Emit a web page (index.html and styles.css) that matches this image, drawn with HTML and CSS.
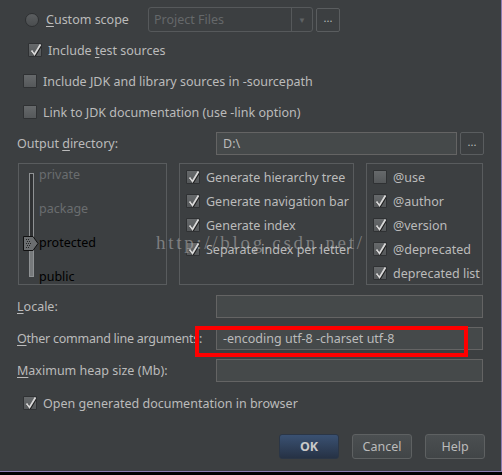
FILE: index.html
```html
<!DOCTYPE html>
<html lang="en">
<head>
  <meta charset="UTF-8" />
  <title>Generate JavaDoc</title>
  <link rel="stylesheet" href="styles.css">
</head>
<body>
  <div class="dialog">
    <!-- scope -->
    <div class="row scope-row">
      <span class="radio"></span>
      <span class="scope-label"><u>C</u>ustom scope</span>
      <div class="combo">
        <span class="combo-text">Project Files</span>
        <span class="combo-arrow">▼</span>
      </div>
      <button class="dots">...</button>
    </div>

    <div class="row check-row test-row">
      <span class="check on"></span>
      <span>Include <u>t</u>est sources</span>
    </div>
    <div class="row check-row">
      <span class="check"></span>
      <span>Include JDK and library sources in -sourcepath</span>
    </div>
    <div class="row check-row">
      <span class="check"></span>
      <span>Link to JDK documentation (use -link option)</span>
    </div>

    <div class="row field-row output-row">
      <span class="field-label">Output <u>d</u>irectory:</span>
      <div class="field short">D:\</div>
      <button class="dots">...</button>
    </div>

    <div class="panels">
      <div class="panel scope-panel">
        <div class="track">
          <div class="track-fill"></div>
          <div class="thumb">
            <svg width="16" height="15" viewBox="0 0 16 15">
              <path d="M0.5 0.5 H10 L15 7.5 L10 14.5 H0.5 Z" fill="#6b6e70" stroke="#111" />
              <g fill="#222">
                <rect x="3" y="3" width="1" height="1" /><rect x="5" y="3" width="1" height="1" />
                <rect x="4" y="5" width="1" height="1" /><rect x="6" y="5" width="1" height="1" />
                <rect x="3" y="7" width="1" height="1" /><rect x="5" y="7" width="1" height="1" /><rect x="7" y="7" width="1" height="1" />
                <rect x="4" y="9" width="1" height="1" /><rect x="6" y="9" width="1" height="1" />
                <rect x="3" y="11" width="1" height="1" /><rect x="5" y="11" width="1" height="1" />
              </g>
            </svg>
          </div>
        </div>
        <div class="levels">
          <span class="level off">private</span>
          <span class="level off">package</span>
          <span class="level">protected</span>
          <span class="level">public</span>
        </div>
      </div>

      <div class="panel options-panel">
        <div class="row check-row"><span class="check on"></span><span>Generate hierarchy tree</span></div>
        <div class="row check-row"><span class="check on"></span><span>Generate navigation bar</span></div>
        <div class="row check-row"><span class="check on"></span><span>Generate index</span></div>
        <div class="row check-row"><span class="check on"></span><span>Separate index per letter</span></div>
      </div>

      <div class="panel tags-panel">
        <div class="row check-row"><span class="check"></span><span>@use</span></div>
        <div class="row check-row"><span class="check on"></span><span>@author</span></div>
        <div class="row check-row"><span class="check on"></span><span>@version</span></div>
        <div class="row check-row"><span class="check on"></span><span>@deprecated</span></div>
        <div class="row check-row"><span class="check on"></span><span>deprecated list</span></div>
      </div>
    </div>

    <div class="row field-row locale-row">
      <span class="field-label"><u>L</u>ocale:</span>
      <div class="field"></div>
    </div>
    <div class="row field-row args-row">
      <span class="field-label"><u>O</u>ther command line arguments:</span>
      <div class="field">-encoding utf-8 -charset utf-8</div>
      <div class="mark"></div>
    </div>
    <div class="row field-row heap-row">
      <span class="field-label"><u>M</u>aximum heap size (Mb):</span>
      <div class="field"></div>
    </div>

    <div class="row check-row open-row">
      <span class="check on"></span>
      <span>Open <u>g</u>enerated documentation in browser</span>
    </div>

    <div class="buttons">
      <button class="btn default">OK</button>
      <button class="btn">Cancel</button>
      <button class="btn">Help</button>
    </div>

    <div class="watermark">http://blog.csdn.net/</div>
  </div>
</body>
</html>
```

FILE: styles.css
```css
* { box-sizing: border-box; }

html {
  background: #000;
}

body {
  margin: 0;
  font-family: 'Noto Sans', 'Liberation Sans', sans-serif;
  font-size: 12.5px;
  color: #bbbbbb;
}

u {
  text-decoration: underline;
  text-underline-offset: 2px;
}

.dialog {
  position: relative;
  width: 502px;
  height: 472px;
  background: #3c3f41;
  border-right: 1px solid #8d7cb3;
  border-bottom: 1px solid #8d7cb3;
  padding-top: 7px;
  overflow: hidden;
}

.row {
  display: flex;
  align-items: center;
}

/* scope line */
.scope-row {
  height: 25px;
  padding-left: 25px;
}

.radio {
  width: 14px;
  height: 14px;
  border-radius: 50%;
  background: linear-gradient(#5b5e60, #4a4d4f);
  border: 1px solid #2e3032;
  flex: none;
}

.scope-label {
  width: 109px;
  padding-left: 7px;
}

.combo {
  width: 165px;
  height: 25px;
  border: 1px solid #56595b;
  border-radius: 3px;
  display: flex;
  align-items: center;
}

.combo-text {
  flex: 1;
  padding-left: 5px;
  color: #65686a;
}

.combo-arrow {
  width: 21px;
  height: 100%;
  border-left: 1px solid #56595b;
  display: flex;
  align-items: center;
  justify-content: center;
  font-size: 8px;
  color: #5f6264;
}

.dots {
  width: 24px;
  height: 24px;
  margin-left: 3px;
  background: #3c3f41;
  border: 1px solid #5a5d5f;
  border-radius: 2px;
  color: #bbbbbb;
  font-family: inherit;
  font-size: 11px;
  padding: 0 0 4px;
  line-height: 1;
}

/* checkboxes */
.check-row {
  height: 16px;
  padding-left: 23px;
  gap: 6px;
}

.check {
  width: 14px;
  height: 14px;
  flex: none;
  border: 1px solid #2f3133;
  border-radius: 1px;
  background: linear-gradient(#66696b, #55585a);
}

.check.on {
  background:
    url("data:image/svg+xml,%3Csvg xmlns='http://www.w3.org/2000/svg' width='14' height='14'%3E%3Cpath d='M2.5 6.5 L5.5 10.5 L11.5 0.5' fill='none' stroke='%23202020' stroke-width='2.2' transform='translate(0.6 0.8)'/%3E%3Cpath d='M2.5 6.5 L5.5 10.5 L11.5 0.5' fill='none' stroke='%23d8d8d8' stroke-width='1.8'/%3E%3C/svg%3E") no-repeat 0 0,
    linear-gradient(#66696b, #55585a);
}

.test-row {
  margin-top: 10px;
  padding-left: 28px;
}

.test-row + .check-row {
  margin-top: 15px;
}

.test-row + .check-row + .check-row {
  margin-top: 15px;
}

/* label + field rows */
.field-row {
  position: relative;
  height: 23px;
  padding-left: 17px;
}

.field-label {
  width: 199px;
}

.args-row .field-label {
  letter-spacing: -0.25px;
}

.field {
  width: 267px;
  height: 23px;
  background: #45494a;
  border: 1px solid #646464;
  padding: 0 6px;
  display: flex;
  align-items: center;
  color: #bbbbbb;
}

.field.short {
  width: 241px;
}

.output-row {
  margin-top: 12px;
}

.output-row .dots {
  height: 23px;
}

.locale-row {
  margin-top: 10px;
}

.args-row,
.heap-row {
  margin-top: 9px;
}

.mark {
  position: absolute;
  left: 195px;
  top: -1px;
  width: 273px;
  height: 31px;
  border: 4px solid #ff0000;
}

/* three boxes */
.panels {
  display: flex;
  gap: 12px;
  height: 122px;
  margin-top: 8px;
  padding-left: 18px;
}

.panel {
  border: 1px solid #595c5e;
  height: 122px;
}

.scope-panel {
  width: 149px;
  display: flex;
  padding: 9px 0 0 10px;
}

.track {
  position: relative;
  width: 5px;
  height: 104px;
  border: 1px solid #8f9294;
  background: #2f3133;
}

.track-fill {
  position: absolute;
  left: 0;
  right: 0;
  top: 70px;
  bottom: 0;
  background: #777a7c;
}

.thumb {
  position: absolute;
  left: -7px;
  top: 62px;
  line-height: 0;
}

.levels {
  display: flex;
  flex-direction: column;
  padding-left: 5px;
  gap: 17px;
  margin-top: -7px;
}

.level {
  height: 17px;
  line-height: 17px;
  color: #000;
}

.level.off {
  color: #6a6d6f;
}

.options-panel {
  width: 175px;
  padding-top: 5px;
}

.tags-panel {
  width: 117px;
  padding-top: 5px;
}

.options-panel .check-row,
.tags-panel .check-row {
  padding-left: 6px;
  margin-bottom: 8px;
}

.open-row {
  margin-top: 13px;
}

/* bottom buttons */
.buttons {
  display: flex;
  justify-content: flex-end;
  gap: 13px;
  margin-top: 23px;
  padding-right: 16px;
}

.btn {
  width: 60px;
  height: 25px;
  border: 1px solid #5e6162;
  border-radius: 3px;
  background: linear-gradient(#4b4f51, #414547);
  color: #bbbbbb;
  font-family: inherit;
  font-size: 12.5px;
  padding: 0;
}

.btn.default {
  background: linear-gradient(#3a5172, #263245);
  border-color: #2b3646;
  font-weight: bold;
  color: #c9c9c9;
}

.watermark {
  position: absolute;
  left: 156px;
  top: 232px;
  font-family: 'Liberation Serif', serif;
  font-size: 19px;
  letter-spacing: 2.7px;
  color: rgba(190, 190, 190, 0.5);
  pointer-events: none;
}
```
